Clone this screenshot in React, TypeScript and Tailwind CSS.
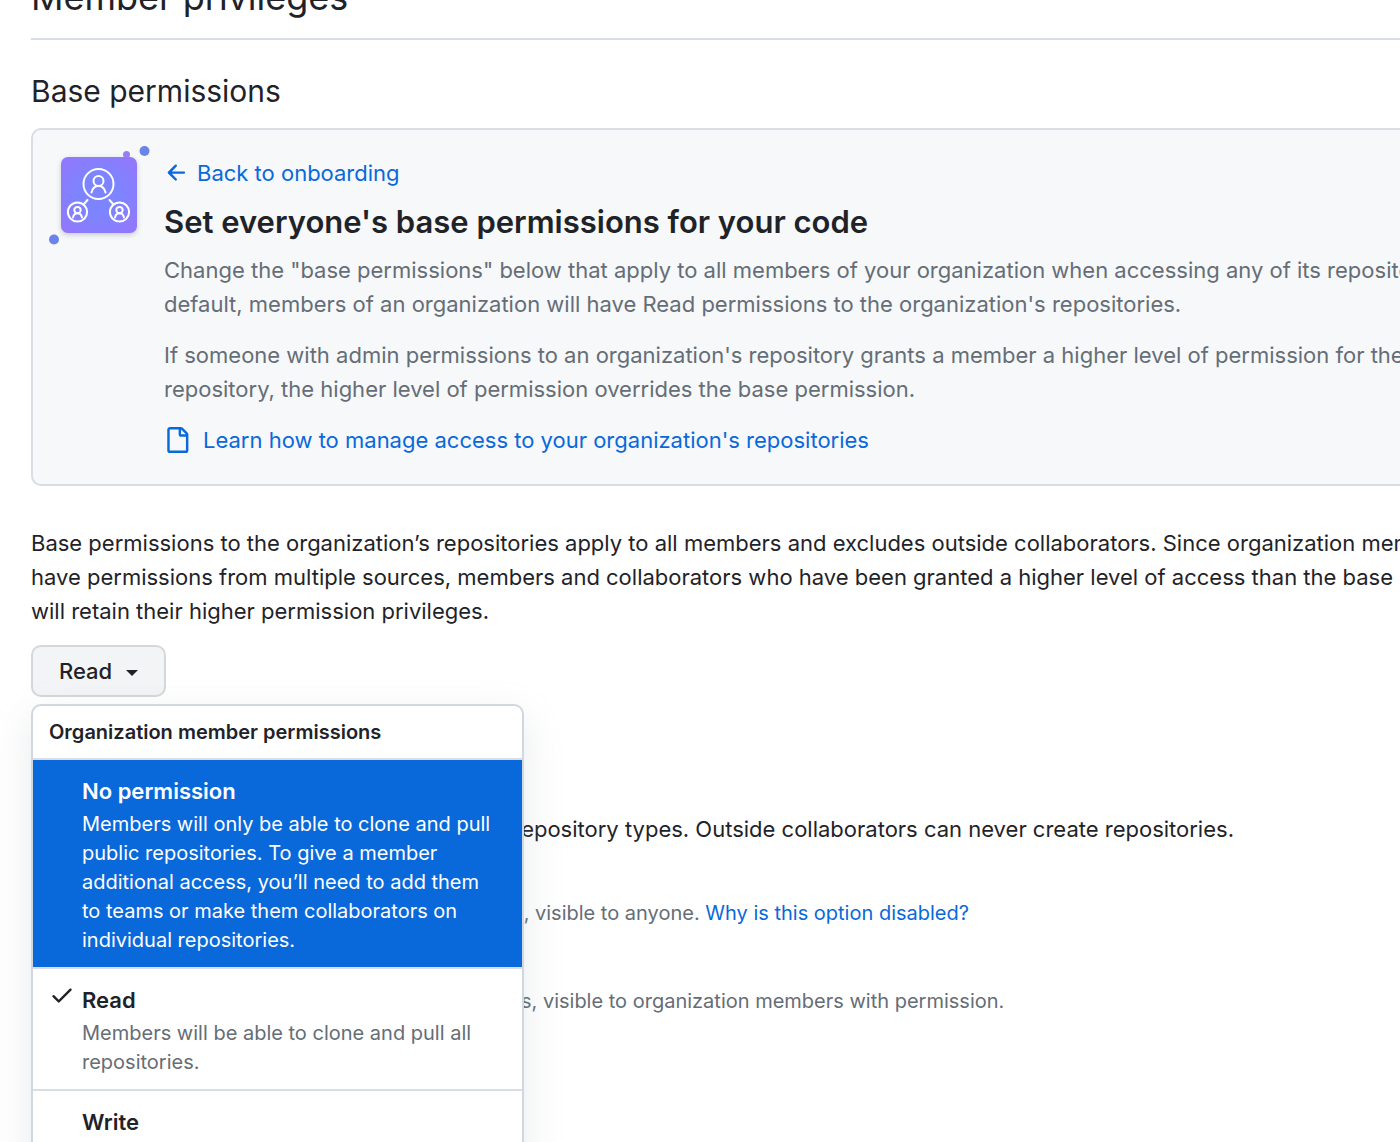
import React from "react";

interface Permission {
  name: string;
  description: string;
  active?: boolean;
  selected?: boolean;
}

const permissions: Permission[] = [
  {
    name: "No permission",
    description:
      "Members will only be able to clone and pull public repositories. To give a member additional access, you’ll need to add them to teams or make them collaborators on individual repositories.",
    active: true,
  },
  {
    name: "Read",
    description: "Members will be able to clone and pull all repositories.",
    selected: true,
  },
  {
    name: "Write",
    description: "Members will be able to clone, pull, and push all repositories.",
  },
];

function Octicon({ d }: { d: string }) {
  return (
    <svg viewBox="0 0 16 16" fill="currentColor" aria-hidden="true" className="size-[26px] shrink-0">
      <path d={d} />
    </svg>
  );
}

const arrowLeft =
  "M7.78 12.53a.75.75 0 0 1-1.06 0L2.47 8.28a.75.75 0 0 1 0-1.06l4.25-4.25a.751.751 0 0 1 1.042.018.751.751 0 0 1 .018 1.042L4.81 7h7.44a.75.75 0 0 1 0 1.5H4.81l2.97 2.97a.75.75 0 0 1 0 1.06Z";
const file =
  "M2 1.75C2 .784 2.784 0 3.75 0h6.586c.464 0 .909.184 1.237.513l2.914 2.914c.329.328.513.773.513 1.237v9.586A1.75 1.75 0 0 1 13.25 16h-9.5A1.75 1.75 0 0 1 2 14.25Zm1.75-.25a.25.25 0 0 0-.25.25v12.5c0 .138.112.25.25.25h9.5a.25.25 0 0 0 .25-.25V6h-2.75A1.75 1.75 0 0 1 9 4.25V1.5Zm6.75.062V4.25c0 .138.112.25.25.25h2.688l-.011-.013-2.914-2.914-.013-.011Z";
const check =
  "M13.78 4.22a.75.75 0 0 1 0 1.06l-7.25 7.25a.75.75 0 0 1-1.06 0L2.22 9.28a.751.751 0 0 1 .018-1.042.751.751 0 0 1 1.042-.018L6 10.94l6.72-6.72a.75.75 0 0 1 1.06 0Z";

function Person({ x, y, scale }: { x: number; y: number; scale: number }) {
  return (
    <g transform={`translate(${x} ${y}) scale(${scale})`}>
      <circle r="15" strokeWidth={2 / scale} />
      <circle cy="-3" r="5" strokeWidth={2 / scale} />
      <path d="M-7 8.500C-6 4 -3.500 2 0 2S6 4 7 8.500" strokeWidth={2 / scale} />
    </g>
  );
}

function OnboardingArt() {
  return (
    <svg viewBox="0 0 104 104" aria-hidden="true" className="-mt-[10px] -ml-[13px] h-[104px] w-[104px] shrink-0">
      <defs>
        <radialGradient id="tile" cx="50%" cy="50%" r="70%">
          <stop offset="0.350" stopColor="#7b85ff" />
          <stop offset="1" stopColor="#9675fc" />
        </radialGradient>
        <filter id="tileShadow" x="-20%" y="-20%" width="140%" height="150%">
          <feDropShadow dx="0" dy="2" stdDeviation="2.500" floodColor="#8c959f" floodOpacity="0.45" />
        </filter>
      </defs>
      <circle cx="79.500" cy="8.500" r="3.500" fill="#9c7cf5" />
      <rect x="14" y="11" width="76" height="76" rx="7" fill="url(#tile)" filter="url(#tileShadow)" />
      <circle cx="97.500" cy="5" r="5" fill="#6c84e9" />
      <circle cx="7" cy="93.500" r="5" fill="#6c84e9" />
      <g fill="none" stroke="#fff" strokeLinecap="round">
        <Person x={51.5} y={38} scale={1} />
        <Person x={30.5} y={66} scale={0.64} />
        <Person x={72.5} y={66} scale={0.64} />
        <path d="M36.500 58.500L40.500 54M66.500 58.500L62.500 54" strokeWidth="2" />
      </g>
    </svg>
  );
}

function OnboardingCard() {
  return (
    <section className="-mr-12 flex gap-[13px] rounded-[10px] border-2 border-[#d8dee4] bg-[#f6f8fa] px-[27px] pt-[26px] pb-[27px]">
      <OnboardingArt />
      <div className="whitespace-nowrap text-[#656d76]">
        <a href="#onboarding" className="flex items-center gap-[7px] text-[#0969da]">
          <Octicon d={arrowLeft} />
          Back to onboarding
        </a>
        <h3 className="mt-[7px] mb-[6px] text-[31px] leading-[50px] font-semibold text-[#1f2328]">
          Set everyone's base permissions for your code
        </h3>
        <p>
          Change the "base permissions" below that apply to all members of your organization when accessing any of its repositories. By
          <br />
          default, members of an organization will have Read permissions to the organization's repositories.
        </p>
        <p className="mt-[17px]">
          If someone with admin permissions to an organization's repository grants a member a higher level of permission for the
          <br />
          repository, the higher level of permission overrides the base permission.
        </p>
        <a href="#learn" className="mt-[17px] flex items-center gap-[13px] text-[#0969da]">
          <Octicon d={file} />
          Learn how to manage access to your organization's repositories
        </a>
      </div>
    </section>
  );
}

function PermissionMenu() {
  return (
    <div
      role="menu"
      className="absolute top-[59px] left-0 z-10 w-[493px] overflow-hidden rounded-[10px] border-2 border-[#d0d7de] bg-white shadow-[0_13px_39px_rgba(140,149,159,0.2)]"
    >
      <div className="px-4 py-3 text-[20px] leading-7 font-semibold">Organization member permissions</div>
      {permissions.map((item) => (
        <button
          key={item.name}
          type="button"
          role="menuitemradio"
          aria-checked={!!item.selected}
          className={`flex w-full border-t-2 border-[#d8dee4] pt-3 pr-2 pb-3 pl-4 text-left ${item.active ? "bg-[#0969da] bg-clip-padding text-white" : ""}`}
        >
          <span className="w-[33px] shrink-0 pt-px">{item.selected && <Octicon d={check} />}</span>
          <span className="block pr-3">
            <span className="block leading-[38px] font-semibold">{item.name}</span>
            <span className={`block text-[20px] leading-[29px] ${item.active ? "text-white" : "text-[#656d76]"}`}>
              {item.description}
            </span>
          </span>
        </button>
      ))}
    </div>
  );
}

export default function App() {
  return (
    <main className="h-screen overflow-hidden bg-white px-[31px] font-['Inter',sans-serif] text-[22px] leading-[34px] text-[#1f2328]">
      <h1 className="-mt-8 -mr-8 border-b-2 border-[#d8dee4] pb-3 text-[36px] leading-[58px]">Member privileges</h1>
      <h2 className="mt-[26px] mb-3 text-[30px] leading-[50px]">Base permissions</h2>

      <OnboardingCard />

      <p className="mt-10 whitespace-nowrap">
        Base permissions to the organization’s repositories apply to all members and excludes outside collaborators. Since organization members can
        <br />
        have permissions from multiple sources, members and collaborators who have been granted a higher level of access than the base permission
        <br />
        will retain their higher permission privileges.
      </p>

      <div className="relative mt-[17px] w-fit">
        <button
          type="button"
          aria-haspopup="menu"
          aria-expanded="true"
          className="flex h-[52px] items-center gap-[14px] rounded-[10px] border-2 border-[#d5d8da] bg-[#f3f4f6] px-[26px] font-medium"
        >
          Read
          <span className="mt-1 border-x-[6px] border-t-[6px] border-x-transparent border-t-current" />
        </button>
        <PermissionMenu />
      </div>

      <section className="mt-[115px] whitespace-nowrap">
        <p className="pl-3">
          Members will be able to create only selected repository types. Outside collaborators can never create repositories.
        </p>
        <p className="mt-[50px] pl-[22px] text-[20px] text-[#656d76]">
          Members will be able to create public repositories, visible to anyone.{" "}
          <a href="#disabled" className="text-[#0969da]">
            Why is this option disabled?
          </a>
        </p>
        <p className="mt-[54px] pl-[22px] text-[20px] text-[#656d76]">
          Members will be able to create private repositories, visible to organization members with permission.
        </p>
      </section>
    </main>
  );
}
